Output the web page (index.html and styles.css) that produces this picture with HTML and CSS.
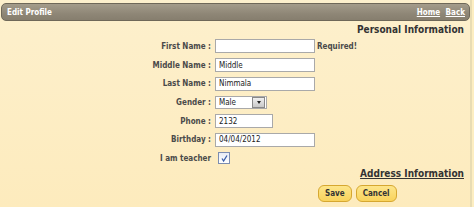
FILE: index.html
```html
<!DOCTYPE html>
<html lang="en">
<head>
    <meta charset="UTF-8">
    <title>Edit Profile</title>
    <link rel="stylesheet" href="styles.css">
</head>
<body>
    <div class="page">
        <div class="titlebar">
            <span class="title">Edit Profile</span>
            <span class="links"><a href="#">Home</a> <a href="#">Back</a></span>
        </div>

        <div class="section-head">Personal Information</div>

        <form class="profile">
            <div class="row">
                <label for="first">First Name :</label>
                <input type="text" id="first" class="wide">
                <span class="required">Required!</span>
            </div>
            <div class="row">
                <label for="middle">Middle Name :</label>
                <input type="text" id="middle" class="wide" value="Middle">
            </div>
            <div class="row">
                <label for="last">Last Name :</label>
                <input type="text" id="last" class="wide" value="Nimmala">
            </div>
            <div class="row">
                <label for="gender">Gender :</label>
                <span class="select">
                    <span class="select-value">Male</span>
                    <span class="select-btn"><span class="arrow"></span></span>
                </span>
            </div>
            <div class="row">
                <label for="phone">Phone :</label>
                <input type="text" id="phone" class="short" value="2132">
            </div>
            <div class="row">
                <label for="birthday">Birthday :</label>
                <input type="text" id="birthday" class="wide" value="04/04/2012">
            </div>
            <div class="row">
                <label>I am teacher</label>
                <span class="check">
                    <svg width="9" height="9" viewBox="0 0 9 9"><path d="M2 4.5 L3.6 7 L7 1.5" fill="none" stroke="#3a5ea8" stroke-width="1.3"/></svg>
                </span>
            </div>
        </form>

        <div class="section-link"><a href="#">Address Information</a></div>

        <div class="buttons">
            <button type="button">Save</button>
            <button type="button">Cancel</button>
        </div>
    </div>
</body>
</html>
```

FILE: styles.css
```css
body {
    margin: 0;
    font-family: "DejaVu Sans Condensed", "DejaVu Sans", Verdana, sans-serif;
    background: #fdeec2;
}

.page {
    width: 472px;
    height: 207px;
    box-sizing: border-box;
    padding: 3px 0 0 1px;
    background: linear-gradient(to bottom, #fdf0cd 0%, #fdebbd 100%);
    border-right: 2px solid #e8dcb4;
}

.titlebar {
    display: flex;
    justify-content: space-between;
    align-items: center;
    height: 18px;
    padding: 0 4px 0 5px;
    border-radius: 5px;
    background: linear-gradient(to bottom, #a49c8b 0%, #8f8777 60%, #867e6e 100%);
    border: 1px solid #6f6859;
    box-sizing: border-box;
    color: #fff;
    font-size: 8px;
    font-weight: bold;
}

.links a {
    color: #fff;
    margin-left: 3px;
}

.section-head {
    text-align: right;
    padding: 3px 6px 0 0;
    font-size: 10px;
    font-weight: bold;
    color: #333;
}

.profile {
    margin-top: 2px;
}

.row {
    display: flex;
    align-items: center;
    height: 18.7px;
}

.row label {
    width: 214px;
    padding-right: 4px;
    text-align: right;
    font-size: 8px;
    font-weight: bold;
    color: #4a4a4a;
    box-sizing: border-box;
}

.row input {
    height: 14px;
    box-sizing: border-box;
    border: 1px solid #a9a9a9;
    padding: 0 3px;
    font-family: "DejaVu Sans Condensed", "DejaVu Sans", Verdana, sans-serif;
    font-size: 8px;
    color: #222;
    background: #fff;
}

.wide {
    width: 100px;
}

.short {
    width: 58px;
}

.required {
    margin-left: 2px;
    font-size: 8px;
    font-weight: bold;
    color: #4a4a4a;
}

.select {
    display: flex;
    align-items: center;
    width: 52px;
    height: 13px;
    box-sizing: border-box;
    border: 1px solid #a9a9a9;
    background: #fff;
    font-size: 8px;
    color: #222;
}

.select-value {
    flex: 1;
    padding-left: 3px;
}

.select-btn {
    display: flex;
    align-items: center;
    justify-content: center;
    width: 11px;
    height: 9px;
    margin-right: 1px;
    border: 1px solid #888;
    background: linear-gradient(to bottom, #f0f0f0, #c8c8c8);
}

.arrow {
    width: 0;
    height: 0;
    border-left: 2.5px solid transparent;
    border-right: 2.5px solid transparent;
    border-top: 3px solid #222;
}

.check {
    display: flex;
    align-items: center;
    justify-content: center;
    width: 10px;
    height: 10px;
    margin-left: 3px;
    border: 1px solid #7c8db0;
    background: linear-gradient(to bottom, #e8ecf4, #fff);
}

.section-link {
    text-align: right;
    padding: 0 6px 0 0;
    font-size: 10px;
    font-weight: bold;
}

.section-link a {
    color: #333;
}

.buttons {
    display: flex;
    gap: 4px;
    padding: 6px 0 0 317px;
}

.buttons button {
    height: 17px;
    padding: 0 6px;
    border: 1px solid #d6a730;
    border-radius: 6px;
    background: linear-gradient(to bottom, #fde58a 0%, #f9d35c 100%);
    font-family: "DejaVu Sans Condensed", "DejaVu Sans", Verdana, sans-serif;
    font-size: 8px;
    font-weight: bold;
    color: #333;
}
```
